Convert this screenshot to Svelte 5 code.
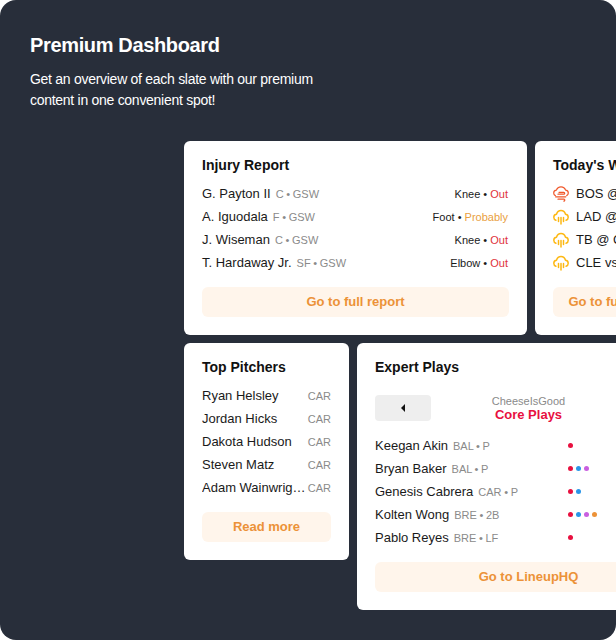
<script>
	const injuries = [
		{ name: 'G. Payton II', meta: 'C • GSW', part: 'Knee', status: 'Out' },
		{ name: 'A. Iguodala', meta: 'F • GSW', part: 'Foot', status: 'Probably' },
		{ name: 'J. Wiseman', meta: 'C • GSW', part: 'Knee', status: 'Out' },
		{ name: 'T. Hardaway Jr.', meta: 'SF • GSW', part: 'Elbow', status: 'Out' }
	];
	const weather = [
		{ game: 'BOS @ NYY', storm: true },
		{ game: 'LAD @ SF', storm: false },
		{ game: 'TB @ CHC', storm: false },
		{ game: 'CLE vs MIN', storm: false }
	];
	const pitchers = ['Ryan Helsley', 'Jordan Hicks', 'Dakota Hudson', 'Steven Matz', 'Adam Wainwrig…'];
	const plays = [
		{ name: 'Keegan Akin', meta: 'BAL • P', dots: ['red'] },
		{ name: 'Bryan Baker', meta: 'BAL • P', dots: ['red', 'blue', 'purple'] },
		{ name: 'Genesis Cabrera', meta: 'CAR • P', dots: ['red', 'blue'] },
		{ name: 'Kolten Wong', meta: 'BRE • 2B', dots: ['red', 'blue', 'purple', 'orange'] },
		{ name: 'Pablo Reyes', meta: 'BRE • LF', dots: ['red'] }
	];
</script>

<div class="panel">
	<header class="intro">
		<h1>Premium Dashboard</h1>
		<p>Get an overview of each slate with our premium content in one convenient spot!</p>
	</header>

	<div class="board">
		<div class="row">
			<section class="card injury">
				<h2>Injury Report</h2>
				<ul>
					{#each injuries as item}
						<li>
							<span class="name">{item.name}</span>
							<span class="meta">{item.meta}</span>
							<span class="detail">{item.part} • <span class={item.status === 'Out' ? 'out' : 'probable'}>{item.status}</span></span>
						</li>
					{/each}
				</ul>
				<button>Go to full report</button>
			</section>

			<section class="card today">
				<h2>Today's Weather</h2>
				<ul>
					{#each weather as item}
						<li>
							{#if item.storm}
								<svg class="icon" viewBox="0 0 16 16" fill="none" stroke="#f0582b" stroke-width="1.2" stroke-linecap="round" stroke-linejoin="round">
									<path d="M2.400 9.600C1.300 9.100.7 8.100.7 7c0-1.600 1.200-2.800 2.700-2.900C4.100 2.100 5.900.8 8 .8s3.900 1.300 4.600 3.300c1.500.1 2.700 1.300 2.700 2.900 0 1.100-.6 2.100-1.600 2.600" />
									<path d="M6 6.300h4.800c1.200 0 1.200 1.900 0 1.900H5" />
									<path d="M2.600 10.800h10.200" />
									<path d="M5 13.200h6c1.100 0 1.100 1.900-.2 1.900" />
								</svg>
							{:else}
								<svg class="icon" viewBox="0 0 16 16" fill="none" stroke="#fdb813" stroke-width="1.5" stroke-linecap="round" stroke-linejoin="round">
									<path d="M2.900 11.200C1.600 10.800.8 9.600.8 8.200c0-1.600 1.200-2.900 2.700-3C4.200 3 5.900 1.500 8 1.500s3.800 1.500 4.500 3.700c1.500.1 2.700 1.400 2.700 3 0 1.400-.8 2.600-2.100 3" />
									<path d="M5.500 8.500v4M8 8.500v6.500M10.500 8.500v4" />
								</svg>
							{/if}
							<span class="name">{item.game}</span>
						</li>
					{/each}
				</ul>
				<button>Go to full report</button>
			</section>
		</div>

		<div class="row">
			<section class="card pitchers">
				<h2>Top Pitchers</h2>
				<ul>
					{#each pitchers as name}
						<li>
							<span class="name clip">{name}</span>
							<span class="meta team">CAR</span>
						</li>
					{/each}
				</ul>
				<button>Read more</button>
			</section>

			<section class="card plays">
				<h2>Expert Plays</h2>
				<div class="switcher">
					<button class="back" aria-label="Previous">
						<svg width="4" height="8" viewBox="0 0 4 8"><path d="M4 0v8L0 4z" fill="#111" /></svg>
					</button>
					<div class="author">
						<span>CheeseIsGood</span>
						<strong>Core Plays</strong>
					</div>
				</div>
				<ul>
					{#each plays as item}
						<li>
							<span class="name">{item.name}</span>
							<span class="meta">{item.meta}</span>
							<span class="dots">
								{#each item.dots as dot}
									<i class={dot}></i>
								{/each}
							</span>
						</li>
					{/each}
				</ul>
				<button>Go to LineupHQ</button>
			</section>
		</div>
	</div>
</div>

<style>
	:global(body) {
		background: #fff;
		font-family: 'Liberation Sans', Arial, sans-serif;
		overflow: hidden;
	}

	.panel {
		box-sizing: border-box;
		width: 616px;
		height: 640px;
		padding: 32px 0 0 30px;
		background: #282e3a;
		border-radius: 16px;
		overflow: hidden;
	}

	.intro h1 {
		margin: 0 0 10px;
		font-size: 20px;
		line-height: 27px;
		font-weight: 700;
		letter-spacing: -0.35px;
		color: #fff;
	}

	.intro p {
		width: 300px;
		margin: 0;
		font-size: 14px;
		line-height: 21px;
		letter-spacing: -0.28px;
		color: #fff;
	}

	.board {
		display: flex;
		flex-direction: column;
		gap: 8px;
		margin: 30px 0 0 154px;
	}

	.row {
		display: flex;
		gap: 8px;
	}

	.card {
		box-sizing: border-box;
		flex: none;
		padding: 15px 18px 18px;
		background: #fff;
		border-radius: 6px;
	}

	.injury {
		width: 343px;
		height: 194px;
	}

	.today {
		width: 165px;
		height: 194px;
	}

	.pitchers {
		width: 165px;
		height: 217px;
	}

	.plays {
		width: 343px;
		height: 267px;
	}

	h2 {
		margin: 0;
		font-size: 14px;
		line-height: 18px;
		font-weight: 700;
		white-space: nowrap;
		color: #111;
	}

	ul {
		list-style: none;
		margin: 8px 0 13px;
		padding: 0;
	}

	li {
		display: flex;
		align-items: center;
		height: 23px;
		white-space: nowrap;
	}

	.name {
		font-size: 13px;
		color: #1a1a1a;
	}

	.meta {
		margin-left: 5px;
		font-size: 11px;
		word-spacing: -0.4px;
		color: #8a8a8a;
	}

	.detail {
		margin: 0 1px 0 auto;
		font-size: 11px;
		color: #1a1a1a;
	}

	.out {
		color: #e0323c;
	}

	.probable {
		color: #e9a03e;
	}

	button {
		display: block;
		width: 100%;
		height: 30px;
		padding: 0 0 2px;
		border: 0;
		border-radius: 6px;
		background: #fff5eb;
		color: #ec9238;
		font-family: inherit;
		font-size: 13px;
		font-weight: 700;
		white-space: nowrap;
	}

	.icon {
		flex: none;
		width: 16px;
		height: 16px;
		margin-right: 7px;
	}

	.clip {
		flex: 1;
		min-width: 0;
		overflow: hidden;
	}

	.team {
		flex: none;
		margin-left: 2px;
	}

	.switcher {
		display: grid;
		grid-template-columns: 56px 1fr 56px;
		align-items: center;
		height: 26px;
		margin-top: 18px;
	}

	.back {
		display: flex;
		align-items: center;
		justify-content: center;
		height: 26px;
		padding: 0;
		border-radius: 4px;
		background: #eee;
	}

	.author {
		display: flex;
		flex-direction: column;
		align-items: center;
		font-size: 11px;
		line-height: 14px;
		color: #8a8a8a;
	}

	.author strong {
		font-size: 13px;
		line-height: 14px;
		color: #e8103f;
	}

	.plays ul {
		margin-top: 14px;
	}

	.dots {
		display: flex;
		gap: 3px;
		flex: none;
		width: 114px;
		margin-left: auto;
	}

	.dots i {
		display: block;
		width: 5px;
		height: 5px;
		border-radius: 50%;
	}

	.red { background: #e8103f; }
	.blue { background: #2b96e8; }
	.purple { background: #c95fe0; }
	.orange { background: #ec9238; }
</style>
